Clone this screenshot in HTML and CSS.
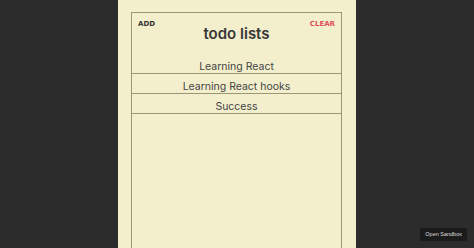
FILE: index.html
```html
<!DOCTYPE html>
<html>
<head>
<meta charset="utf-8">
<link rel="stylesheet" href="styles.css">
</head>
<body>
<div class="page">
  <div class="panel">
    <div class="box">
      <div class="header">
        <span class="btn add">ADD</span>
        <h1 class="title">todo lists</h1>
        <span class="btn clear">CLEAR</span>
      </div>
      <ul class="list">
        <li class="item">Learning React</li>
        <li class="item">Learning React hooks</li>
        <li class="item">Success</li>
      </ul>
    </div>
  </div>
  <div class="sandbox">Open Sandbox</div>
</div>
</body>
</html>
```
FILE: styles.css
```css
html, body {
  margin: 0;
  padding: 0;
  height: 100%;
}
body {
  background: #2c2c2c;
  font-family: "Inter", "Open Sans", sans-serif;
  overflow: hidden;
}
.page {
  height: 100%;
  display: flex;
  justify-content: center;
}
.panel {
  width: 238px;
  background: #f3efcd;
  padding: 12px 14px 0 13px;
  box-sizing: border-box;
  display: flex;
}
.box {
  flex: 1;
  border: 1px solid #9c9678;
  border-bottom: none;
}
.header {
  display: grid;
  grid-template-columns: 1fr auto 1fr;
  align-items: start;
  padding: 7px 6px 0 6px;
  height: 41px;
  box-sizing: border-box;
}
.btn {
  font-family: "DejaVu Sans", sans-serif;
  font-weight: 900;
  font-size: 7px;
  line-height: 8px;
}
.add {
  color: #333;
  justify-self: start;
}
.clear {
  color: #e0505a;
  justify-self: end;
}
.title {
  margin: 4px 0 0 0;
  font-size: 15px;
  font-weight: 600;
  color: #363636;
  line-height: 20px;
}
.list {
  list-style: none;
  margin: 0;
  padding: 0;
}
.item {
  height: 19px;
  box-sizing: content-box;
  border-bottom: 1px solid #9c9678;
  text-align: center;
  font-size: 10.5px;
  line-height: 25px;
  color: #444;
  overflow: hidden;
}
.sandbox {
  position: absolute;
  right: 7px;
  bottom: 7px;
  background: #1b1b1b;
  color: #ddd;
  font-family: "Liberation Sans", sans-serif;
  font-size: 5.5px;
  padding: 3px 5px;
  border-radius: 2px;
  line-height: 7px;
}
```
